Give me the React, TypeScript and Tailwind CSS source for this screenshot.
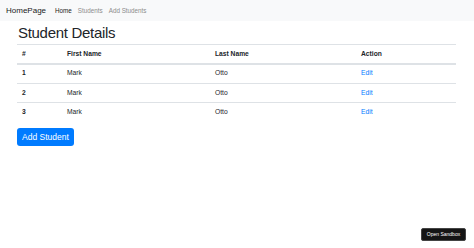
const students = [
  { id: 1, first: 'Mark', last: 'Otto' },
  { id: 2, first: 'Mark', last: 'Otto' },
  { id: 3, first: 'Mark', last: 'Otto' },
];

export default function App() {
  return (
    <div className="relative h-[248px] w-[474px] bg-white text-[#212529] font-['Liberation_Sans',Arial,sans-serif]">
      <nav className="flex h-[21px] items-center bg-[#f8f9fa] px-[6px]">
        <span className="mr-[9px] text-[8px] text-[#1a1a1a]">HomePage</span>
        <div className="flex gap-[6px] text-[6.3px]">
          <span className="text-[#1a1a1a]">Home</span>
          <span className="text-[#8c8c8c]">Students</span>
          <span className="text-[#8c8c8c]">Add Students</span>
        </div>
      </nav>

      <div className="px-[17px]">
        <h1 className="mt-[2px] ml-px h-[20px] text-[15px] leading-[20px] tracking-[-0.3px] text-[#212529]">Student Details</h1>

        <table className="mt-[1px] w-[439px] border-collapse text-left text-[6.7px]">
          <thead>
            <tr className="h-[19px] border-t border-b-2 border-[#dee2e6]">
              <th className="w-[45px] px-[5px] font-bold">#</th>
              <th className="w-[148px] px-[5px] font-bold">First Name</th>
              <th className="w-[146px] px-[5px] font-bold">Last Name</th>
              <th className="px-[5px] font-bold">Action</th>
            </tr>
          </thead>
          <tbody>
            {students.map((s, i) => (
              <tr key={s.id} className={`h-[19.5px] ${i > 0 ? 'border-t border-[#dee2e6]' : ''}`}>
                <td className="px-[5px] font-bold">{s.id}</td>
                <td className="px-[5px]">{s.first}</td>
                <td className="px-[5px]">{s.last}</td>
                <td className="px-[5px] text-[#007bff]">Edit</td>
              </tr>
            ))}
          </tbody>
        </table>

        <button className="mt-[6px] flex h-[18px] w-[57px] items-center justify-center rounded-[3px] bg-[#007bff] text-[8.5px] text-white">
          Add Student
        </button>
      </div>

      <div className="absolute top-[228px] left-[421px] flex h-[13px] w-[45px] items-center justify-center rounded-[2px] border border-[#444] bg-[#151515] text-[5px] text-white">
        Open Sandbox
      </div>
    </div>
  );
}
